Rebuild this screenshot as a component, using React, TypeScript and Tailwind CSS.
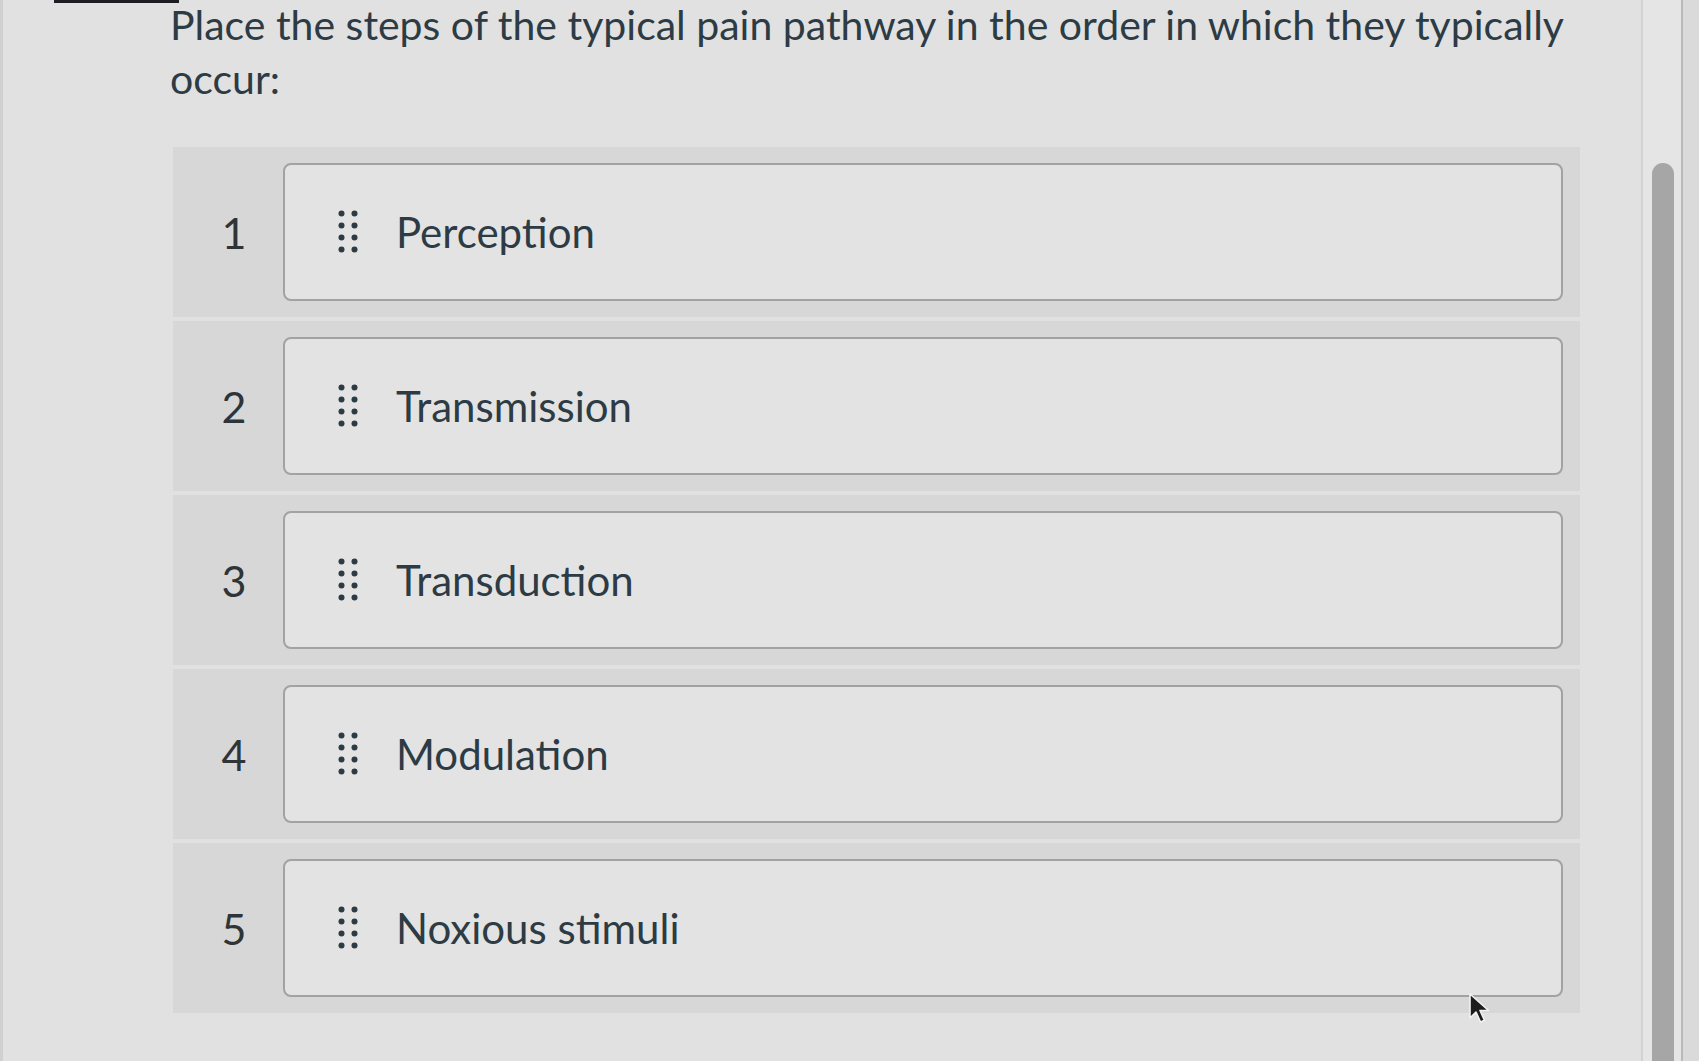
import React from "react";

const steps = ["Perception", "Transmission", "Transduction", "Modulation", "Noxious stimuli"];

function Grip() {
  const xs = [3.5, 16.5];
  const ys = [3.5, 15.5, 27.5, 39.5];
  return (
    <svg width="21" height="44" viewBox="0 0 21 44" className="shrink-0">
      {ys.map((y) =>
        xs.map((x) => <circle key={`${x}-${y}`} cx={x} cy={y} r="3" fill="#2d3b45" />)
      )}
    </svg>
  );
}

function Pointer() {
  return (
    <svg width="26" height="34" viewBox="0 0 26 34" className="absolute left-[1468px] top-[992px]">
      <path
        d="M2 2 L2 26 L8 20 L12.5 30 L16.5 28.3 L12 18.5 L20.5 18.5 Z"
        fill="#1c1c1e"
        stroke="#f2f2f2"
        strokeWidth="1.6"
        strokeLinejoin="round"
      />
    </svg>
  );
}

export default function App() {
  return (
    <div className="relative w-[1699px] h-[1061px] overflow-hidden bg-[#e1e1e1] text-[#2d3b45] font-['Lato','Open_Sans',sans-serif] flex">
      <div className="flex-1 flex flex-col border-l-[3px] border-[#d0d0d0]">
        <div className="ml-[51px] w-[125px] h-[3px] bg-[#1d1e22]" />
        <div className="pl-[167px] pr-[20px] -mt-[5px]">
          <h1 className="text-[41px] leading-[54px] font-normal text-[#2d3b45]">
            Place the steps of the typical pain pathway in the order in which they typically occur:
          </h1>
          <ol className="mt-[41px] ml-[3px] w-[1407px] flex flex-col gap-[4px]">
            {steps.map((s, i) => (
              <li key={s} className="h-[170px] bg-[#d7d7d7] flex items-center pr-[17px]">
                <span className="w-[110px] pl-[12px] text-center text-[43px] leading-none text-[#2f3438]">
                  {i + 1}
                </span>
                <div className="flex-1 h-[138px] rounded-[8px] border-2 border-[#a2a2a2] bg-[#e3e3e3] flex items-center pl-[53px]">
                  <Grip />
                  <span className="ml-[37px] text-[42px] leading-none text-[#2d3b45]">{s}</span>
                </div>
              </li>
            ))}
          </ol>
        </div>
      </div>
      <div className="w-[58px] flex">
        <div className="w-[42px] border-l-2 border-[#d2d2d2] border-r-2 border-r-[#b9b9b9] bg-[#e5e5e5] flex justify-center pt-[163px] pl-[2px]">
          <div className="w-[22px] h-[920px] rounded-full bg-[#a6a6a6]" />
        </div>
        <div className="flex-1 bg-[#dadada]" />
      </div>
      <Pointer />
    </div>
  );
}
